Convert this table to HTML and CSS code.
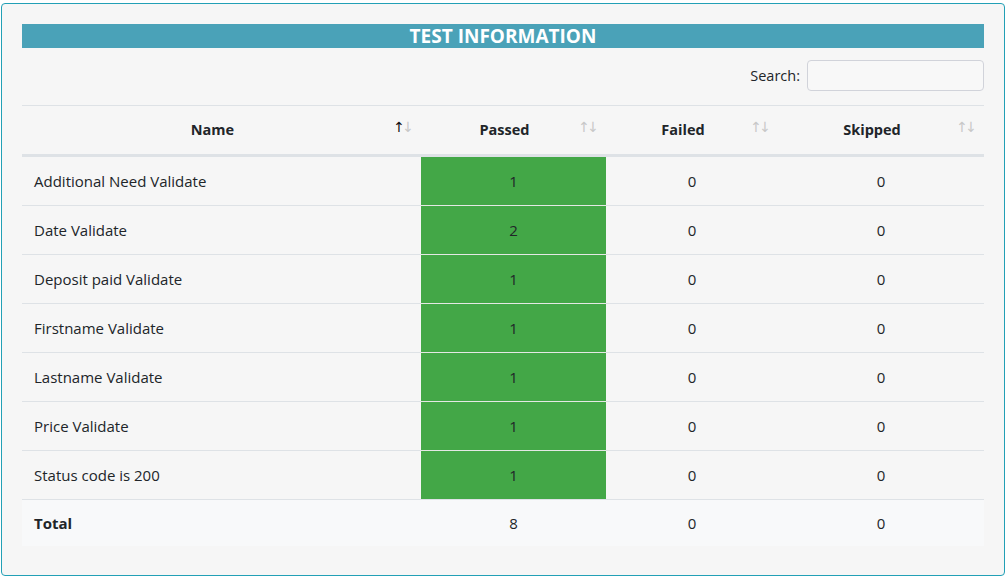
FILE: index.html
```html
<!DOCTYPE html>
<html>
<head>
<meta charset="utf-8">
<link rel="stylesheet" href="styles.css">
</head>
<body>
<div class="card">
  <div class="title">TEST INFORMATION</div>
  <div class="search-row">
    <label class="search-label">Search:</label>
    <input class="search-input" type="text">
  </div>
  <table class="results">
    <colgroup>
      <col class="c-name"><col class="c-passed"><col class="c-failed"><col class="c-skipped">
    </colgroup>
    <thead>
      <tr>
        <th class="sort sort-asc">Name</th>
        <th class="sort">Passed</th>
        <th class="sort">Failed</th>
        <th class="sort">Skipped</th>
      </tr>
    </thead>
    <tbody>
      <tr><td class="name">Additional Need Validate</td><td class="pass">1</td><td>0</td><td>0</td></tr>
      <tr><td class="name">Date Validate</td><td class="pass">2</td><td>0</td><td>0</td></tr>
      <tr><td class="name">Deposit paid Validate</td><td class="pass">1</td><td>0</td><td>0</td></tr>
      <tr><td class="name">Firstname Validate</td><td class="pass">1</td><td>0</td><td>0</td></tr>
      <tr><td class="name">Lastname Validate</td><td class="pass">1</td><td>0</td><td>0</td></tr>
      <tr><td class="name">Price Validate</td><td class="pass">1</td><td>0</td><td>0</td></tr>
      <tr><td class="name">Status code is 200</td><td class="pass">1</td><td>0</td><td>0</td></tr>
    </tbody>
    <tfoot>
      <tr><th class="name">Total</th><td>8</td><td>0</td><td>0</td></tr>
    </tfoot>
  </table>
</div>
</body>
</html>
```

FILE: styles.css
```css
* { box-sizing: border-box; }
html, body { margin: 0; background: #ffffff; }
body {
  padding: 3px 0 0 1px;
  font-family: "Open Sans", "Noto Sans", sans-serif;
  color: #212529;
}
.card {
  width: 1004px;
  height: 573px;
  border: 1px solid #22a0b6;
  border-radius: 4px;
  background: #f6f6f6;
  padding: 20px;
}
.title {
  background: #4aa2b8;
  color: #ffffff;
  height: 24px;
  line-height: 24px;
  text-align: center;
  font-weight: 700;
  font-size: 19px;
}
.search-row {
  display: flex;
  justify-content: flex-end;
  align-items: center;
  gap: 7px;
  margin-top: 12px;
  height: 31px;
}
.search-label { font-size: 14.5px; color: #212529; }
.search-input {
  width: 177px;
  height: 31px;
  border: 1px solid #d1d3da;
  border-radius: 4px;
  background: #f8f8f8;
  margin: 0;
}
.results {
  margin-top: 14px;
  width: 962px;
  border-collapse: collapse;
  table-layout: fixed;
  font-size: 15px;
}
.c-name { width: 399px; }
.c-passed { width: 185px; }
.c-failed { width: 172px; }
.c-skipped { width: 206px; }
.results th, .results td {
  border-top: 1px solid #dee2e6;
  padding: 12px;
  height: 49px;
  line-height: 24px;
  text-align: center;
}
.results thead th {
  position: relative;
  font-weight: 700;
  font-size: 14.5px;
  border-bottom: 3px solid #dee2e6;
  padding-right: 30px;
  height: 50px;
}
.sort::before, .sort::after {
  position: absolute;
  top: 13px;
  font-family: "DejaVu Sans", sans-serif;
  font-size: 14px;
  font-weight: 400;
  color: #c8c8c8;
  line-height: 16px;
}
.sort::before { content: "\2191"; right: 16px; }
.sort::after { content: "\2193"; right: 7px; }
.sort-asc::before { color: #111111; }
.results td.name, .results th.name { text-align: left; }
.results tbody td { color: #212529; }
.results td.pass { background: #43a747; border-top-color: #e4e8e4; }
.results tfoot th, .results tfoot td {
  background: #f8f9fa;
  height: 46px;
  padding: 10px 12px;
}
.results tfoot th { font-weight: 700; }
```
